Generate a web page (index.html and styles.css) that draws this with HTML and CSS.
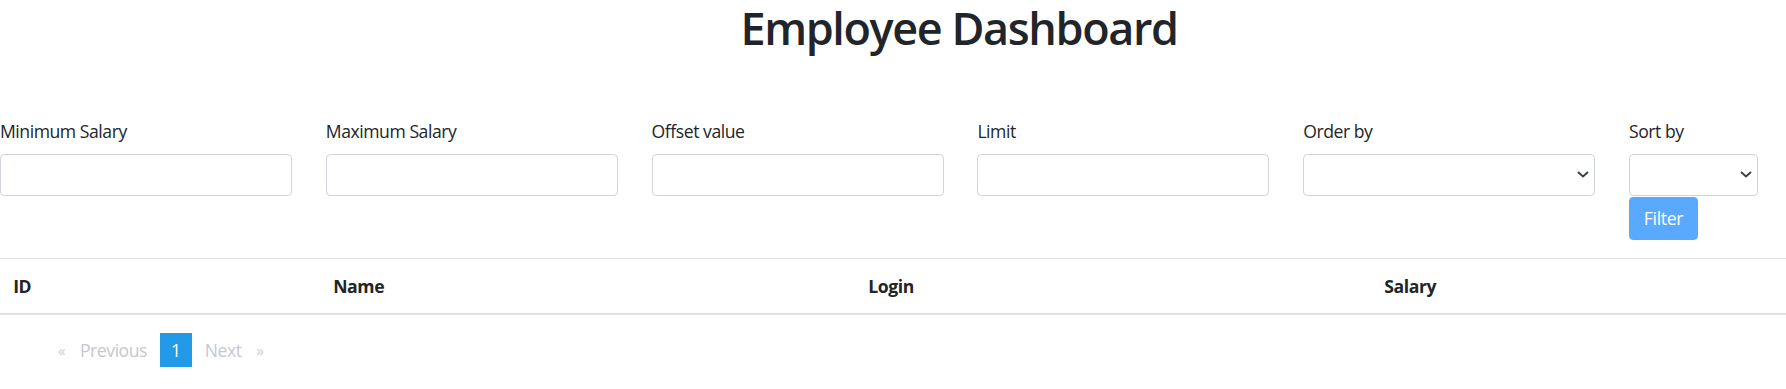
FILE: index.html
```html
<!DOCTYPE html>
<html lang="en">
<head>
<meta charset="utf-8">
<title>Employee Dashboard</title>
<link rel="stylesheet" href="styles.css">
</head>
<body>
<div class="page">
  <h1 class="title">Employee Dashboard</h1>
  <form class="filters">
    <div class="field">
      <label class="label">Minimum Salary</label>
      <input class="control" type="text">
    </div>
    <div class="field">
      <label class="label">Maximum Salary</label>
      <input class="control" type="text">
    </div>
    <div class="field">
      <label class="label">Offset value</label>
      <input class="control" type="text">
    </div>
    <div class="field">
      <label class="label">Limit</label>
      <input class="control" type="text">
    </div>
    <div class="field">
      <label class="label">Order by</label>
      <div class="select-wrap">
        <select class="control select"><option></option></select>
        <svg class="chevron" viewBox="0 0 12 7" width="12" height="7"><path d="M1 1l5 4.5L11 1" fill="none" stroke="#3c4148" stroke-width="2"/></svg>
      </div>
    </div>
    <div class="field">
      <label class="label">Sort by</label>
      <div class="select-wrap">
        <select class="control select"><option></option></select>
        <svg class="chevron" viewBox="0 0 12 7" width="12" height="7"><path d="M1 1l5 4.5L11 1" fill="none" stroke="#3c4148" stroke-width="2"/></svg>
      </div>
      <button class="btn" type="button" disabled>Filter</button>
    </div>
  </form>
  <table class="table">
    <thead>
      <tr>
        <th class="col-id">ID</th>
        <th class="col-name">Name</th>
        <th class="col-login">Login</th>
        <th class="col-salary">Salary</th>
      </tr>
    </thead>
    <tbody></tbody>
  </table>
  <ul class="pagination">
    <li class="pg-item pg-arrow">«</li>
    <li class="pg-item">Previous</li>
    <li class="pg-item pg-active">1</li>
    <li class="pg-item">Next</li>
    <li class="pg-item pg-arrow">»</li>
  </ul>
</div>
</body>
</html>
```

FILE: styles.css
```css
* { box-sizing: border-box; }
html, body { margin: 0; padding: 0; background: #fff; }
body {
  font-family: "Open Sans", "Noto Sans", sans-serif;
  font-size: 17.6px;
  line-height: 26.4px;
  color: #212529;
  overflow: hidden;
}
.page { width: 1786px; }
.title {
  margin: 0;
  padding: 2px 0 0 132px;
  text-align: center;
  font-size: 45px;
  line-height: 52.8px;
  font-weight: 600;
  letter-spacing: -1.4px;
  color: #212529;
}
.filters {
  display: grid;
  grid-template-columns: repeat(5, 292px) 129px;
  column-gap: 33.8px;
  margin-top: 63px;
}
.field { display: flex; flex-direction: column; }
.label {
  display: block;
  font-size: 17.6px;
  line-height: 26.4px;
  margin-bottom: 10px;
  letter-spacing: -0.45px;
}
.control {
  display: block;
  width: 100%;
  height: 42px;
  border: 1px solid #ced4da;
  border-radius: 4.4px;
  background: #fff;
  font: inherit;
  padding: 0 13px;
  margin: 0;
  outline: none;
}
.select-wrap { position: relative; }
.select { appearance: none; -webkit-appearance: none; }
.chevron {
  position: absolute;
  right: 6px;
  top: 17px;
  width: 12px;
  height: 7px;
  pointer-events: none;
}
.btn {
  align-self: flex-start;
  width: 69px;
  height: 43px;
  margin-top: 0.5px;
  border: 0;
  border-radius: 4.4px;
  background: #59a9ff;
  color: #fff;
  font: inherit;
  letter-spacing: -0.3px;
  padding: 0;
}
.table {
  width: 1786px;
  margin-top: 18px;
  border-collapse: collapse;
  table-layout: fixed;
}
.table th {
  text-align: left;
  font-weight: 700;
  font-size: 17.6px;
  line-height: 26.4px;
  padding: 14.6px 13.2px 13.6px;
  border-top: 1px solid #dee2e6;
  border-bottom: 2px solid #dee2e6;
  letter-spacing: -0.4px;
}
.col-id { width: 320px; }
.col-name { width: 535px; }
.col-login { width: 516px; }
.col-salary { width: 415px; }
.pagination {
  display: flex;
  list-style: none;
  margin: 18px 0 0 0;
  padding: 0 0 0 50px;
}
.pg-item {
  height: 34px;
  line-height: 34px;
  padding: 0 7px;
  color: #c6c8cc;
  letter-spacing: -0.45px;
}
.pg-arrow { color: #c9ccd0; font-size: 15px; padding: 0 8px; }
.pg-active {
  background: #229ae8;
  color: #fff;
  padding: 0 11px;
  margin: 0 6px;
}
```
